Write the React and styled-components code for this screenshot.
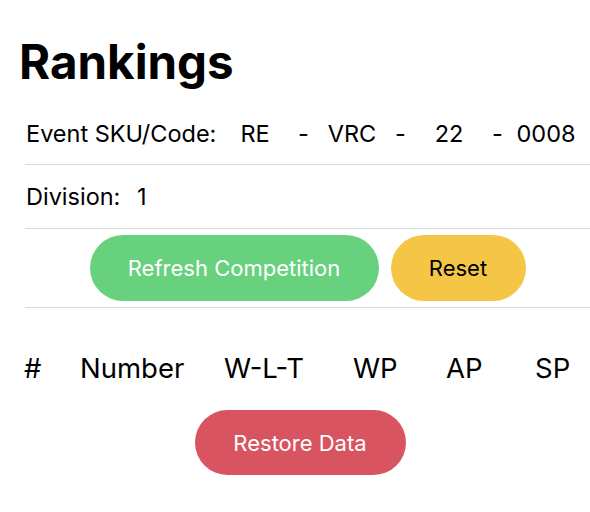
import styled, { createGlobalStyle } from 'styled-components';

const GlobalStyle = createGlobalStyle`
  body {
    margin: 0;
    background: #ffffff;
    font-family: Inter, 'Liberation Sans', sans-serif;
    color: #000000;
  }
`;

const skuParts = ['RE', 'VRC', '22', '0008'];
const columns = ['#', 'Number', 'W-L-T', 'WP', 'AP', 'SP'];

export default function App() {
  return (
    <>
      <GlobalStyle />
      <SPage>
        <STitle>Rankings</STitle>
        <SForm>
          <SRow height={61}>
            <SLabel width={199}>Event SKU/Code:</SLabel>
            {skuParts.map((part, i) => (
              <SSkuGroup key={part}>
                {i > 0 && <SDash>-</SDash>}
                <SField>{part}</SField>
              </SSkuGroup>
            ))}
          </SRow>
          <SRow height={63}>
            <SLabel width={111}>Division:</SLabel>
            <SValue>1</SValue>
          </SRow>
          <SButtonRow>
            <SPill color="#68d17e" textColor="#ffffff" width={289}>
              Refresh Competition
            </SPill>
            <SPill color="#f5c546" textColor="#000000" width={135}>
              Reset
            </SPill>
          </SButtonRow>
        </SForm>
        <SHeader>
          {columns.map((c) => (
            <SHeaderCell key={c}>{c}</SHeaderCell>
          ))}
        </SHeader>
        <SFooter>
          <SPill color="#d95461" textColor="#ffffff" width={211} height={65}>
            Restore Data
          </SPill>
        </SFooter>
      </SPage>
    </>
  );
}

const SPage = styled.div`
  width: 590px;
  padding-top: 34px;
`;

const STitle = styled.h1`
  margin: 0;
  padding-left: 19px;
  font-size: 47.5px;
  line-height: 56px;
  font-weight: 700;
`;

const SForm = styled.div`
  margin-left: 25px;
  margin-top: 13px;
`;

const SRow = styled.div`
  display: flex;
  align-items: center;
  height: ${(p) => p.height}px;
  border-bottom: 1px solid #dcdcdc;
  font-size: 23.5px;
`;

const SLabel = styled.span`
  flex: none;
  width: ${(p) => p.width}px;
  padding-left: 1px;
`;

const SValue = styled.span``;

const SSkuGroup = styled.div`
  display: flex;
  align-items: center;
`;

const SField = styled.span`
  width: 60px;
  text-align: center;
`;

const SDash = styled.span`
  width: 37px;
  text-align: center;
`;

const SButtonRow = styled.div`
  display: flex;
  justify-content: center;
  gap: 12px;
  padding: 6px 0;
  border-bottom: 1px solid #dcdcdc;
`;

const SPill = styled.button`
  width: ${(p) => p.width}px;
  height: ${(p) => p.height || 66}px;
  border: none;
  border-radius: 34px;
  background: ${(p) => p.color};
  color: ${(p) => p.textColor};
  font-family: Inter, 'Liberation Sans', sans-serif;
  font-size: 22px;
  padding: 0;
`;

const SHeader = styled.div`
  display: grid;
  grid-template-columns: 56px 144px 129px 93px 89px auto;
  padding-left: 24px;
  margin-top: 45px;
  font-size: 27.5px;
  line-height: 30px;
`;

const SHeaderCell = styled.span``;

const SFooter = styled.div`
  display: flex;
  justify-content: center;
  padding-left: 10px;
  margin-top: 27px;
`;
